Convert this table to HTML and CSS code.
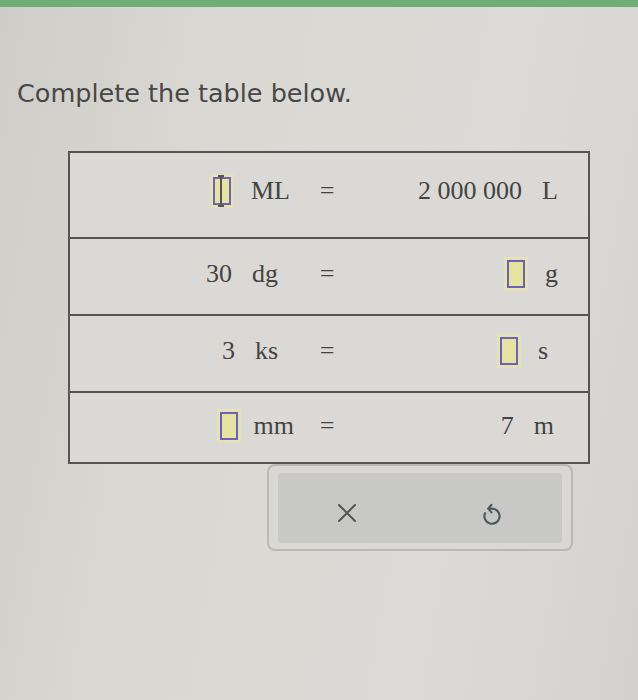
FILE: index.html
```html
<!DOCTYPE html>
<html>
<head>
<meta charset="utf-8">
<link rel="stylesheet" href="styles.css">
</head>
<body>
<div class="topbar"></div>
<main class="page">
  <h1 class="prompt">Complete the table below.</h1>
  <div class="table">
    <div class="row r1">
      <div class="lhs"><span class="box"><span class="cursor"></span></span><span class="unit">ML</span></div>
      <div class="eq">=</div>
      <div class="rhs"><span class="num">2 000 000</span><span class="unit">L</span></div>
    </div>
    <div class="row r2">
      <div class="lhs"><span class="num">30</span><span class="unit">dg</span></div>
      <div class="eq">=</div>
      <div class="rhs"><span class="box"></span><span class="unit">g</span></div>
    </div>
    <div class="row r3">
      <div class="lhs"><span class="num">3</span><span class="unit">ks</span></div>
      <div class="eq">=</div>
      <div class="rhs"><span class="box"></span><span class="unit">s</span></div>
    </div>
    <div class="row r4">
      <div class="lhs"><span class="box"></span><span class="unit">mm</span></div>
      <div class="eq">=</div>
      <div class="rhs"><span class="num">7</span><span class="unit">m</span></div>
    </div>
  </div>
  <div class="actions">
    <div class="btns">
      <button class="btn btn-clear" aria-label="Clear">
        <svg width="22" height="22" viewBox="0 0 22 22"><path d="M3 3 L19 19 M19 3 L3 19" stroke="#555" stroke-width="2" fill="none" stroke-linecap="round"/></svg>
      </button>
      <button class="btn btn-undo" aria-label="Undo">
        <svg width="24" height="26" viewBox="0 0 22 24"><path d="M8 7 H11 A7 7 0 1 1 4.6 11.2" stroke="#4a5a5e" stroke-width="2" fill="none" stroke-linecap="round"/><path d="M10.5 3.5 L7.5 7 L10.5 10.5" stroke="#4a5a5e" stroke-width="2" fill="none" stroke-linecap="round" stroke-linejoin="round"/></svg>
      </button>
    </div>
  </div>
</main>
</body>
</html>
```
FILE: styles.css
```css
* { box-sizing: border-box; }
html, body { margin: 0; padding: 0; }
body {
  width: 638px;
  height: 700px;
  overflow: hidden;
  background: linear-gradient(100deg, #cfcdc8 0%, #d9d8d3 30%, #dcdbd7 70%, #d3d2ce 100%);
  font-family: "Liberation Serif", serif;
  color: #444;
}
.topbar {
  height: 7px;
  background: #6fae74;
}
.prompt {
  margin: 67px 0 0 17px;
  font-family: "DejaVu Sans", sans-serif;
  font-weight: normal;
  font-size: 25.5px;
  line-height: 38px;
  color: #474747;
}
.table {
  margin: 39px 0 0 68px;
  width: 522px;
  border: 2px solid #555;
  background: #dad9d5;
}
.row {
  display: grid;
  grid-template-columns: 220px 74px 1fr;
  align-items: center;
  height: 77px;
  font-size: 26px;
  padding: 0 30px 6px 0;
}
.row + .row { border-top: 2px solid #555; }
.r1 { height: 84px; padding-bottom: 8px; }
.r4 { height: 71px; padding-bottom: 4px; }
.lhs, .rhs {
  display: flex;
  justify-content: flex-end;
  align-items: center;
  gap: 20px;
}
.eq {
  text-align: center;
}
.r3 .lhs { padding-right: 12px; }
.r2 .lhs { padding-right: 12px; }
.r4 .lhs { margin-right: -4px; gap: 16px; }
.r3 .rhs { padding-right: 10px; }
.r4 .rhs { padding-right: 4px; }
.box {
  position: relative;
  display: inline-block;
  width: 18px;
  height: 28px;
  border: 2px solid #6c63b4;
  background: #e6e3a2;
  box-shadow: 0 0 0 3px #e2e1b8;
}
.cursor {
  position: absolute;
  left: 5px;
  top: -4px;
  width: 2px;
  height: 32px;
  background: #555;
}
.cursor::before, .cursor::after {
  content: "";
  position: absolute;
  left: -2px;
  width: 6px;
  height: 2px;
  background: #555;
}
.cursor::before { top: 0; }
.cursor::after { bottom: 0; }
.actions {
  margin: 0 0 0 267px;
  width: 306px;
  height: 87px;
  border: 2px solid #b9b8b4;
  border-radius: 8px;
  padding: 7px 9px 6px;
  background: #d9d8d4;
}
.btns {
  display: grid;
  grid-template-columns: 1fr 1fr;
  height: 100%;
  background: #c8c8c6;
  border-radius: 4px;
}
.btn {
  border: 0;
  background: transparent;
  display: flex;
  align-items: center;
  justify-content: center;
  padding: 0;
}
.btn-clear { padding-right: 4px; padding-top: 10px; }
.btn-undo { padding-left: 2px; padding-top: 12px; }
```
